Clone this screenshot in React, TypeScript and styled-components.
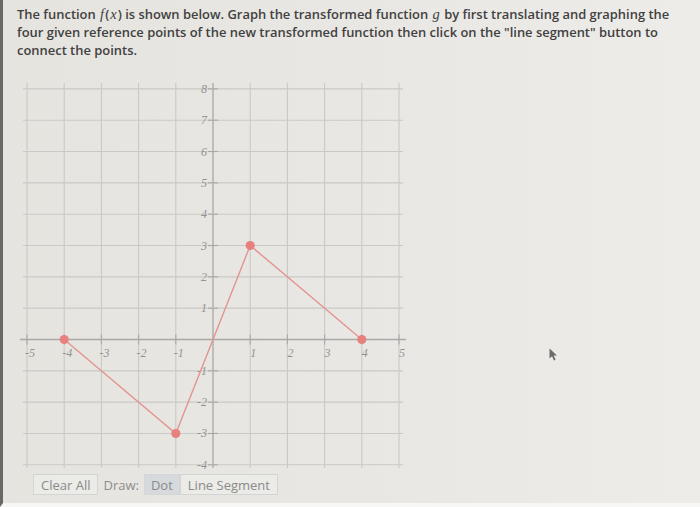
import React from "react";
import styled, { createGlobalStyle } from "styled-components";

const Global = createGlobalStyle`
  html, body { margin: 0; padding: 0; }
  body {
    width: 700px;
    height: 507px;
    overflow: hidden;
    background: #e8e6e1;
    font-family: "Open Sans", "Liberation Sans", sans-serif;
  }
`;

const Page = styled.div`
  position: relative;
  width: 700px;
  height: 507px;
  box-sizing: border-box;
  border-left: 3px solid #6a6866;
  border-bottom: 4px solid #f7f7f6;
  background: linear-gradient(90deg, #e6e4df 0%, #e9e7e3 50%, #eeece9 100%);
  padding: 5px 0 0 14px;
  display: flex;
  flex-direction: column;
`;

const Question = styled.p`
  margin: 0;
  width: 683px;
  white-space: nowrap;
  font-size: 12.95px;
  line-height: 18px;
  font-weight: 600;
  color: #414141;
  letter-spacing: 0px;
`;

const MathVar = styled.span`
  font-family: "Liberation Serif", "DejaVu Serif", serif;
  font-style: italic;
  font-weight: 400;
  font-size: 14.5px;
  padding: 0 1px;
`;

const Graph = styled.svg`
  display: block;
  margin: 19px 0 0 -14px;
  width: 420px;
  height: 395px;
  overflow: visible;
`;

const Toolbar = styled.div`
  display: flex;
  align-items: center;
  margin: 1px 0 0 16px;
  height: 21px;
  font-size: 13px;
  color: #8d8d8d;
`;

const Button = styled.div<{ $active?: boolean }>`
  height: 21px;
  box-sizing: border-box;
  display: flex;
  align-items: center;
  padding: 0 ${(p) => (p.$active ? 6 : 7)}px;
  border: 1px solid ${(p) => (p.$active ? "#d3d7da" : "#d4d4d2")};
  background: ${(p) => (p.$active ? "#d6dadd" : "#ebebe8")};
  color: #8a8a8a;
`;

const Label = styled.span`
  padding: 0 5px 0 5px;
`;

const Cursor = styled.svg`
  position: absolute;
  left: 546px;
  top: 348px;
  width: 9px;
  height: 13px;
`;

const OX = 210;
const OY = 261.5;
const UX = 37.2;
const UY = 31.33;
const px = (x: number) => OX + x * UX;
const py = (y: number) => OY - y * UY;

const xs = [-5, -4, -3, -2, -1, 0, 1, 2, 3, 4, 5];
const ys = [8, 7, 6, 5, 4, 3, 2, 1, 0, -1, -2, -3, -4];
const pts: [number, number][] = [
  [-4, 0],
  [-1, -3],
  [1, 3],
  [4, 0],
];

const labelStyle = {
  fontFamily: '"Liberation Serif", "DejaVu Serif", serif',
  fontStyle: "italic" as const,
  fontSize: 12,
  fill: "#929292",
};

export default function App() {
  return (
    <>
      <Global />
      <Page>
        <Question>
          The function <MathVar>f</MathVar>(<MathVar>x</MathVar>) is shown below. Graph the transformed
          function <MathVar>g</MathVar> by first translating and graphing the
          <br />
          four given reference points of the new transformed function then click on the "line segment" button to
          <br />
          connect the points.
        </Question>
        <Graph viewBox="0 0 420 395">
          {xs.map((x) => (
            <line
              key={"v" + x}
              x1={px(x)}
              x2={px(x)}
              y1={5}
              y2={390}
              stroke={x === 0 ? "#a8a8a8" : "#c9c9c7"}
              strokeWidth={x === 0 ? 1.3 : 1.1}
            />
          ))}
          {ys.map((y) => (
            <line
              key={"h" + y}
              x1={y === 0 ? 17 : 20}
              x2={y === 0 ? 403 : 400}
              y1={py(y)}
              y2={py(y)}
              stroke={y === 0 ? "#a8a8a8" : "#c9c9c7"}
              strokeWidth={y === 0 ? 1.3 : 1.1}
            />
          ))}
          {ys
            .filter((y) => y !== 0)
            .map((y) => (
              <g key={"yl" + y}>
                <line x1={OX - 5} x2={OX + 5} y1={py(y)} y2={py(y)} stroke="#a8a8a8" strokeWidth={1.1} />
                <text x={OX - 6} y={py(y) + 4} textAnchor="end" style={labelStyle}>
                  {y}
                </text>
              </g>
            ))}
          {xs
            .filter((x) => x !== 0)
            .map((x) => (
              <g key={"xl" + x}>
                <line x1={px(x)} x2={px(x)} y1={OY - 5} y2={OY + 5} stroke="#a8a8a8" strokeWidth={1.1} />
                <text x={px(x) + 3} y={OY + 17} textAnchor="middle" style={labelStyle}>
                  {x}
                </text>
              </g>
            ))}
          <polyline
            points={pts.map(([x, y]) => `${px(x)},${py(y)}`).join(" ")}
            fill="none"
            stroke="#e39490"
            strokeWidth={1.4}
          />
          {pts.map(([x, y]) => (
            <circle key={x + "," + y} cx={px(x)} cy={py(y)} r={4.6} fill="#e7817f" />
          ))}
        </Graph>
        <Toolbar>
          <Button>Clear All</Button>
          <Label>Draw:</Label>
          <Button $active>Dot</Button>
          <Button>Line Segment</Button>
        </Toolbar>
        <Cursor viewBox="0 0 9 13">
          <path d="M0.5 0.5 L0.5 10.5 L3 8.2 L5 12.5 L6.6 11.8 L4.7 7.6 L8 7.6 Z" fill="#6b6b6b" />
        </Cursor>
      </Page>
    </>
  );
}
